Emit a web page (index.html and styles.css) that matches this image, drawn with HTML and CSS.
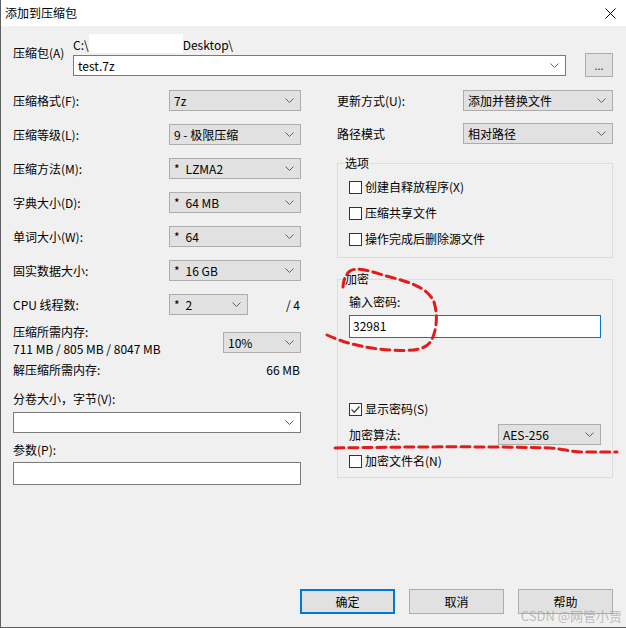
FILE: index.html
```html
<!DOCTYPE html>
<html lang="zh-CN">
<head>
    <meta charset="UTF-8">
    <title>添加到压缩包</title>
    <link rel="stylesheet" href="styles.css">
</head>
<body>
    <div class="window">
        <div class="titlebar">
            <span class="title">添加到压缩包</span>
            <svg class="close" width="11" height="11" viewBox="0 0 11 11">
                <path d="M0.5 0.5 L10.5 10.5 M10.5 0.5 L0.5 10.5"/>
            </svg>
        </div>

        <div class="content">
            <div class="archive-row">
                <label class="archive-label">压缩包(A)</label>
                <div class="archive-path">
                    <div class="path-text"><span>C:\</span><span class="mask"></span><span>Desktop\</span></div>
                    <div class="combo white">
                        <span>test.7z</span>
                        <svg class="chev" viewBox="0 0 9 5"><path d="M0.5 0.5 L4.5 4.5 L8.5 0.5"/></svg>
                    </div>
                </div>
                <button class="browse">...</button>
            </div>

            <div class="columns">
                <!-- compression settings -->
                <div class="col-left">
                    <div class="field">
                        <label>压缩格式(F):</label>
                        <div class="combo"><span>7z</span><svg class="chev" viewBox="0 0 9 5"><path d="M0.5 0.5 L4.5 4.5 L8.5 0.5"/></svg></div>
                    </div>
                    <div class="field">
                        <label>压缩等级(L):</label>
                        <div class="combo"><span>9 - 极限压缩</span><svg class="chev" viewBox="0 0 9 5"><path d="M0.5 0.5 L4.5 4.5 L8.5 0.5"/></svg></div>
                    </div>
                    <div class="field">
                        <label>压缩方法(M):</label>
                        <div class="combo"><span><i class="star">*</i>LZMA2</span><svg class="chev" viewBox="0 0 9 5"><path d="M0.5 0.5 L4.5 4.5 L8.5 0.5"/></svg></div>
                    </div>
                    <div class="field">
                        <label>字典大小(D):</label>
                        <div class="combo"><span><i class="star">*</i>64 MB</span><svg class="chev" viewBox="0 0 9 5"><path d="M0.5 0.5 L4.5 4.5 L8.5 0.5"/></svg></div>
                    </div>
                    <div class="field">
                        <label>单词大小(W):</label>
                        <div class="combo"><span><i class="star">*</i>64</span><svg class="chev" viewBox="0 0 9 5"><path d="M0.5 0.5 L4.5 4.5 L8.5 0.5"/></svg></div>
                    </div>
                    <div class="field">
                        <label>固实数据大小:</label>
                        <div class="combo"><span><i class="star">*</i>16 GB</span><svg class="chev" viewBox="0 0 9 5"><path d="M0.5 0.5 L4.5 4.5 L8.5 0.5"/></svg></div>
                    </div>
                    <div class="field">
                        <label>CPU 线程数:</label>
                        <div class="combo short"><span><i class="star">*</i>2</span><svg class="chev" viewBox="0 0 9 5"><path d="M0.5 0.5 L4.5 4.5 L8.5 0.5"/></svg></div>
                        <span class="threads">/ 4</span>
                    </div>

                    <div class="memory">
                        <div class="memory-text">
                            <div>压缩所需内存:</div>
                            <div>711 MB / 805 MB / 8047 MB</div>
                        </div>
                        <div class="combo percent"><span>10%</span><svg class="chev" viewBox="0 0 9 5"><path d="M0.5 0.5 L4.5 4.5 L8.5 0.5"/></svg></div>
                    </div>
                    <div class="decompress">
                        <span>解压缩所需内存:</span>
                        <span>66 MB</span>
                    </div>

                    <div class="caption volume">分卷大小，字节(V):</div>
                    <div class="combo white full"><span></span><svg class="chev" viewBox="0 0 9 5"><path d="M0.5 0.5 L4.5 4.5 L8.5 0.5"/></svg></div>
                    <div class="caption params">参数(P):</div>
                    <div class="textbox"></div>
                </div>

                <!-- update mode, options, encryption -->
                <div class="col-right">
                    <div class="field wide">
                        <label>更新方式(U):</label>
                        <div class="combo"><span>添加并替换文件</span><svg class="chev" viewBox="0 0 9 5"><path d="M0.5 0.5 L4.5 4.5 L8.5 0.5"/></svg></div>
                    </div>
                    <div class="field wide path-mode">
                        <label>路径模式</label>
                        <div class="combo"><span>相对路径</span><svg class="chev" viewBox="0 0 9 5"><path d="M0.5 0.5 L4.5 4.5 L8.5 0.5"/></svg></div>
                    </div>

                    <fieldset class="group options">
                        <legend>选项</legend>
                        <div class="check"><span class="box"></span>创建自释放程序(X)</div>
                        <div class="check"><span class="box"></span>压缩共享文件</div>
                        <div class="check"><span class="box"></span>操作完成后删除源文件</div>
                    </fieldset>

                    <fieldset class="group encrypt">
                        <legend>加密</legend>
                        <div class="caption">输入密码:</div>
                        <div class="password">32981</div>
                        <div class="check show-pass">
                            <span class="box">
                                <svg viewBox="0 0 11 11"><path d="M1.5 5.5 L4.3 8.3 L9.5 2.5"/></svg>
                            </span>显示密码(S)
                        </div>
                        <div class="algo">
                            <span>加密算法:</span>
                            <div class="combo"><span>AES-256</span><svg class="chev" viewBox="0 0 9 5"><path d="M0.5 0.5 L4.5 4.5 L8.5 0.5"/></svg></div>
                        </div>
                        <div class="check enc-names"><span class="box"></span>加密文件名(N)</div>
                    </fieldset>
                </div>
            </div>
        </div>

        <div class="buttons">
            <button class="btn default">确定</button>
            <button class="btn">取消</button>
            <button class="btn">帮助</button>
        </div>

        <!-- hand-drawn red marks -->
        <svg class="marks" width="626" height="628" viewBox="0 0 626 628">
            <path d="M327 335 C340 341 360 348 390 350 C410 351 425 351 431 341 C437 330 438 315 434 302 C428 288 410 282 390 277 C372 272 358 266 350 271 C345 275 343 282 343 287"/>
            <path d="M335 448 C400 447 480 446 550 448 C565 449 570 452 585 452 L617 452"/>
        </svg>

        <div class="watermark">CSDN @网管小贾</div>
    </div>
</body>
</html>
```

FILE: styles.css
```css
* {
    margin: 0;
    padding: 0;
    box-sizing: border-box;
}

body {
    font-family: "Noto Sans CJK SC", sans-serif;
    font-size: 12px;
    line-height: 16px;
    color: #000;
    background: #fff;
}

.window {
    position: relative;
    width: 626px;
    height: 628px;
    background: #f0f0f0;
    border-left: 1px solid #5f5f5f;
    border-bottom: 1px solid #5f5f5f;
    display: flex;
    flex-direction: column;
    overflow: hidden;
}

.titlebar {
    height: 26px;
    background: #fff;
    display: flex;
    align-items: center;
    justify-content: space-between;
    padding: 0 10px 0 4px;
}

.close path {
    stroke: #000;
    stroke-width: 1;
    fill: none;
}

.content {
    padding: 0 13px 0 12px;
}

/* archive name row */
.archive-row {
    display: flex;
    align-items: flex-start;
    margin-top: 11px;
}

.archive-label {
    width: 60px;
    margin-top: 8px;
}

.archive-path {
    flex: 1;
}

.path-text {
    display: flex;
    align-items: flex-end;
    height: 16px;
}

.mask {
    width: 94px;
    height: 19px;
    background: #fff;
    flex: none;
}

.archive-path .combo {
    margin-top: 2px;
}

.browse {
    width: 28px;
    height: 24px;
    margin: 16px 0 0 19px;
    background: #e1e1e1;
    border: 1px solid #adadad;
    font: inherit;
    font-size: 11px;
    line-height: 12px;
    color: #333;
}

/* combo boxes */
.combo {
    display: flex;
    align-items: center;
    justify-content: space-between;
    height: 21px;
    padding: 0 6px 0 4px;
    background: #e1e1e1;
    border: 1px solid #adadad;
    white-space: nowrap;
}

.combo.white {
    background: #fff;
    border-color: #7a7a7a;
}

.chev {
    width: 9px;
    height: 5px;
    flex: none;
}

.chev path {
    stroke: #606060;
    stroke-width: 1;
    fill: none;
}

.star {
    font-style: normal;
    margin-right: 6px;
}

/* two columns */
.columns {
    display: grid;
    grid-template-columns: 288px 276px;
    column-gap: 36px;
    margin-top: 13px;
}

.field {
    display: flex;
    align-items: center;
    height: 21px;
}

.field + .field {
    margin-top: 13px;
}

.field label {
    flex: 0 0 156px;
}

.field .combo {
    width: 132px;
}

.field .combo.short {
    width: 79px;
}

.threads {
    margin-left: auto;
    padding-right: 1px;
}

.memory {
    display: flex;
    align-items: flex-end;
    justify-content: space-between;
    margin-top: 8px;
    line-height: 17px;
}

.combo.percent {
    width: 78px;
    margin-bottom: 4px;
}

.decompress {
    display: flex;
    justify-content: space-between;
    margin-top: 5px;
    padding-right: 1px;
}

.caption.volume {
    margin-top: 13px;
}

.combo.full {
    margin-top: 5px;
}

.caption.params {
    margin-top: 9px;
}

.textbox {
    height: 23px;
    margin-top: 4px;
    background: #fff;
    border: 1px solid #7a7a7a;
}

/* right column */
.field.wide label {
    flex: 0 0 126px;
}

.field.wide .combo {
    flex: 1;
    width: auto;
}

.field.path-mode {
    margin-top: 12px;
}

.group {
    border: 1px solid #dcdcdc;
    padding: 0 11px 10px 11px;
    min-width: 0;
}

.group legend {
    padding: 0 1px;
    margin-left: -5px;
    line-height: 16px;
}

.options {
    margin-top: 11px;
    padding-top: 8px;
    display: flex;
    flex-direction: column;
    gap: 10px;
}

.check {
    display: flex;
    align-items: center;
    gap: 3px;
    height: 16px;
}

.box {
    width: 13px;
    height: 13px;
    border: 1px solid #333;
    background: #fff;
    flex: none;
    display: flex;
}

.box svg {
    width: 11px;
    height: 11px;
}

.box path {
    stroke: #444;
    stroke-width: 1.3;
    fill: none;
}

.encrypt {
    margin-top: 13px;
    padding-top: 7px;
    padding-bottom: 8px;
}

.password {
    height: 23px;
    margin-top: 5px;
    padding: 2px 3px;
    background: #fff;
    border: 1px solid #0078d7;
}

.show-pass {
    margin-top: 63px;
}

.algo {
    display: flex;
    align-items: center;
    justify-content: space-between;
    height: 21px;
    margin-top: 7px;
}

.algo .combo {
    width: 103px;
}

.enc-names {
    margin-top: 8px;
}

/* dialog buttons */
.buttons {
    margin-top: auto;
    display: flex;
    justify-content: flex-end;
    gap: 14px;
    padding: 0 13px 13px 0;
}

.btn {
    width: 95px;
    height: 25px;
    background: #e1e1e1;
    border: 1px solid #adadad;
    font: inherit;
    color: #000;
}

.btn.default {
    border: 2px solid #0078d7;
}

.marks {
    position: absolute;
    left: -1px;
    top: 0;
    pointer-events: none;
}

.marks path {
    fill: none;
    stroke: #e31b1b;
    stroke-width: 3;
    stroke-dasharray: 9 5;
    stroke-linecap: round;
}

.watermark {
    position: absolute;
    right: 4px;
    bottom: 5px;
    font-size: 13px;
    line-height: 13px;
    color: rgba(150, 150, 150, 0.6);
}
```
